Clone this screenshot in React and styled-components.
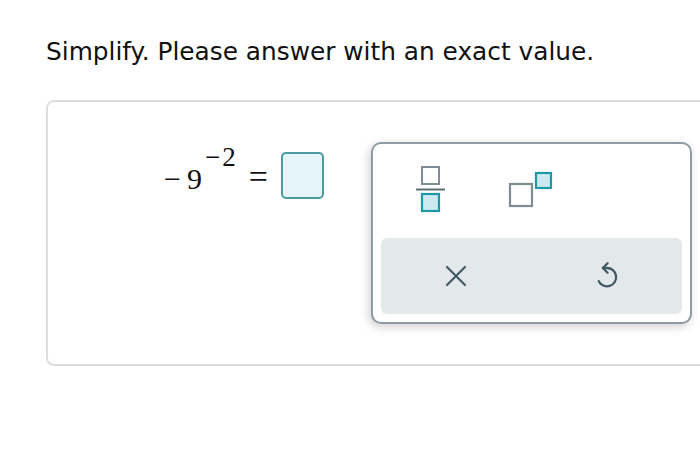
import styled, { createGlobalStyle } from "styled-components";

const Global = createGlobalStyle`
  html, body {
    margin: 0;
    padding: 0;
    background: #ffffff;
  }
`;

const Page = styled.div`
  width: 700px;
  height: 454px;
  overflow: hidden;
  padding: 36px 0 0 46px;
  box-sizing: border-box;
`;

const Title = styled.h1`
  margin: 0;
  font-family: "DejaVu Sans", Verdana, sans-serif;
  font-weight: 400;
  font-size: 24.8px;
  line-height: 32px;
  color: #111111;
`;

const Card = styled.div`
  position: relative;
  margin-top: 32px;
  width: 700px;
  height: 266px;
  box-sizing: border-box;
  border: 2px solid #dedede;
  border-radius: 8px;
  padding: 50px 0 0 116px;
`;

const MathRow = styled.div`
  display: flex;
  align-items: flex-start;
  color: #111111;
`;

const MathText = styled.span`
  font-family: "Liberation Serif", "Times New Roman", serif;
  font-size: ${(p) => p.size}px;
  line-height: 1;
  white-space: nowrap;
`;

const Base = styled(MathText)`
  margin-top: 12px;
  letter-spacing: 6px;
`;

const Sup = styled(MathText)`
  margin-top: -8px;
  margin-left: -3px;
  letter-spacing: 2px;
`;

const Equals = styled(MathText)`
  margin: 8px 13px 0 11px;
`;

const AnswerBox = styled.div`
  width: 43px;
  height: 47px;
  box-sizing: border-box;
  border: 2px solid #4b9ba2;
  border-radius: 5px;
  background: #e6f5fa;
`;

const Keypad = styled.div`
  position: absolute;
  left: 323px;
  top: 40px;
  width: 321px;
  height: 182px;
  box-sizing: border-box;
  border: 2px solid #8e9ca1;
  border-radius: 10px;
  background: #ffffff;
  box-shadow: -2px 3px 10px rgba(0, 0, 0, 0.18);
  padding: 0 8px 8px 8px;
  display: flex;
  flex-direction: column;
`;

const TopRow = styled.div`
  display: grid;
  grid-template-columns: repeat(3, 100px);
  height: 94px;
`;

const KeyBtn = styled.div`
  display: flex;
  align-items: center;
  justify-content: center;
  padding-left: ${(p) => p.shift || 0}px;
  padding-bottom: ${(p) => p.lift || 0}px;
`;

const ActionRow = styled.div`
  flex: 1;
  display: grid;
  grid-template-columns: 1fr 1fr;
  background: #e3e8eb;
  border-radius: 6px;
`;

const FractionIcon = () => (
  <svg width="32" height="48" viewBox="0 0 32 48">
    <rect x="7" y="2" width="17" height="17" fill="#fff" stroke="#7f8d92" strokeWidth="2" />
    <line x1="1" y1="24.5" x2="30" y2="24.5" stroke="#5d6c72" strokeWidth="2" />
    <rect x="7" y="29" width="17" height="17" fill="#cfe9f1" stroke="#1e9aa6" strokeWidth="2.2" />
  </svg>
);

const PowerIcon = () => (
  <svg width="46" height="38" viewBox="0 0 46 38">
    <rect x="2" y="13" width="22" height="22" fill="#fff" stroke="#7f8d92" strokeWidth="2.2" />
    <rect x="28" y="2" width="15" height="15" fill="#cfe9f1" stroke="#1e9aa6" strokeWidth="2.2" />
  </svg>
);

const CloseIcon = () => (
  <svg width="22" height="22" viewBox="0 0 22 22">
    <path d="M2 2 L20 20 M20 2 L2 20" stroke="#3f5a63" strokeWidth="2.2" strokeLinecap="round" fill="none" />
  </svg>
);

const UndoIcon = () => (
  <svg width="30" height="32" viewBox="0 0 26 28">
    <path
      d="M9.5 7 H13 A8 8 0 1 1 5.8 18.5"
      stroke="#3f5a63"
      strokeWidth="2"
      strokeLinecap="round"
      fill="none"
    />
    <path d="M13.5 2.8 L9.3 7 L13.5 11.2" stroke="#3f5a63" strokeWidth="2" strokeLinecap="round" strokeLinejoin="round" fill="none" />
  </svg>
);

export default function App() {
  return (
    <>
      <Global />
      <Page>
        <Title>Simplify. Please answer with an exact value.</Title>
        <Card>
          <MathRow>
            <Base size={30}>−9</Base>
            <Sup size={27}>−2</Sup>
            <Equals size={34}>=</Equals>
            <AnswerBox />
          </MathRow>
          <Keypad>
            <TopRow>
              <KeyBtn shift={-6} lift={4}>
                <FractionIcon />
              </KeyBtn>
              <KeyBtn lift={2}>
                <PowerIcon />
              </KeyBtn>
              <KeyBtn />
            </TopRow>
            <ActionRow>
              <KeyBtn>
                <CloseIcon />
              </KeyBtn>
              <KeyBtn>
                <UndoIcon />
              </KeyBtn>
            </ActionRow>
          </Keypad>
        </Card>
      </Page>
    </>
  );
}
